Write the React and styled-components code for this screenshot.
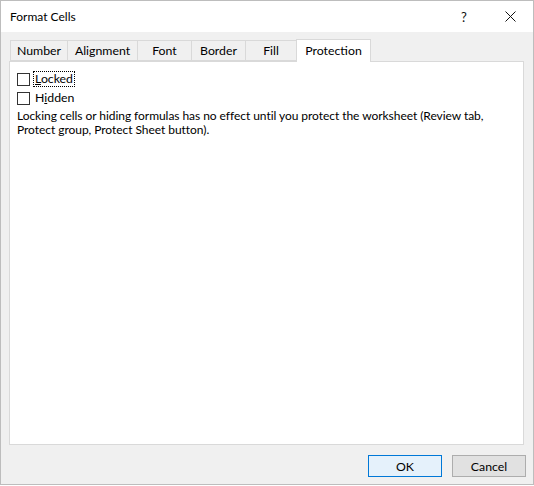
import React from "react";
import styled, { createGlobalStyle } from "styled-components";

const Global = createGlobalStyle`
  html, body { margin: 0; padding: 0; background: #ffffff; }
  body { font-family: "Lato", "Noto Sans", sans-serif; font-size: 12px; color: #000; }
  * { box-sizing: border-box; }
`;

const Window = styled.div`
  width: 534px;
  height: 485px;
  border: 1px solid #bdbdbd;
  display: flex;
  flex-direction: column;
  background: #f0f0f0;
`;

const TitleBar = styled.div`
  height: 31px;
  background: #ffffff;
  display: flex;
  align-items: center;
  padding-left: 9px;
  flex-shrink: 0;
`;

const Title = styled.div`
  flex: 1;
  font-size: 12px;
  padding-bottom: 1px;
`;

const TitleButton = styled.div`
  width: 46px;
  height: 31px;
  display: flex;
  align-items: center;
  justify-content: center;
  font-size: 13px;
  color: #111;
`;

const Body = styled.div`
  flex: 1;
  display: flex;
  flex-direction: column;
  padding: 7px 8px 0 8px;
`;

const TabStrip = styled.div`
  display: flex;
  align-items: flex-end;
  height: 22px;
  padding-left: 1px;
  position: relative;
  z-index: 1;
`;

const Tab = styled.div`
  width: ${(p) => p.$w}px;
  height: ${(p) => (p.$active ? 23 : 21)}px;
  margin-bottom: ${(p) => (p.$active ? -1 : 0)}px;
  margin-left: ${(p) => (p.$first ? 0 : -1)}px;
  background: ${(p) => (p.$active ? "#ffffff" : "#f0f0f0")};
  border: 1px solid #d9d9d9;
  border-bottom: ${(p) => (p.$active ? "none" : "1px solid #d9d9d9")};
  display: flex;
  align-items: center;
  justify-content: center;
  padding-bottom: ${(p) => (p.$active ? 2 : 0)}px;
  font-size: 12.3px;
  color: #000;
`;

const Panel = styled.div`
  height: 384px;
  width: 515px;
  background: #ffffff;
  border: 1px solid #d9d9d9;
  padding: 9px 7px 0 7px;
  display: flex;
  flex-direction: column;
`;

const CheckRow = styled.label`
  display: flex;
  align-items: center;
  height: 16px;
  margin-bottom: ${(p) => p.$mb || 0}px;
  font-size: 12.3px;
`;

const Box = styled.span`
  width: 13px;
  height: 13px;
  border: 1px solid #333333;
  background: #fff;
  flex-shrink: 0;
  margin-right: 3px;
`;

const Label = styled.span`
  padding: 0 1px;
  line-height: 14px;
  border: 1px dotted ${(p) => (p.$focus ? "#000" : "transparent")};
`;

const U = styled.span`
  text-decoration: underline;
`;

const Note = styled.p`
  margin: 3px 0 0 0;
  line-height: 14px;
  font-size: 12px;
  letter-spacing: -0.05px;
  white-space: nowrap;
`;

const Footer = styled.div`
  display: flex;
  justify-content: flex-end;
  gap: 10px;
  padding: 10px 0 0 0;
  margin-right: -1px;
`;

const Button = styled.button`
  width: 74px;
  height: 22px;
  font-family: inherit;
  font-size: 12.3px;
  color: #000;
  background: ${(p) => (p.$primary ? "#e5f1fb" : "#e1e1e1")};
  border: 1px solid ${(p) => (p.$primary ? "#0078d7" : "#adadad")};
  padding: 0;
`;

const tabs = [
  { t: "Number", w: 58 },
  { t: "Alignment", w: 71 },
  { t: "Font", w: 55 },
  { t: "Border", w: 55 },
  { t: "Fill", w: 52 },
  { t: "Protection", w: 75, active: true },
];

export default function App() {
  return (
    <>
      <Global />
      <Window>
        <TitleBar>
          <Title>Format Cells</Title>
          <TitleButton>?</TitleButton>
          <TitleButton>
            <svg width="11" height="11" viewBox="0 0 11 11">
              <path d="M0.5 0.5 L10.5 10.5 M10.5 0.5 L0.5 10.5" stroke="#111" strokeWidth="1" />
            </svg>
          </TitleButton>
        </TitleBar>
        <Body>
          <TabStrip>
            {tabs.map((x, i) => (
              <Tab key={x.t} $w={x.w} $active={x.active} $first={i === 0}>
                {x.t}
              </Tab>
            ))}
          </TabStrip>
          <Panel>
            <CheckRow $mb={3}>
              <Box />
              <Label $focus>
                <U>L</U>ocked
              </Label>
            </CheckRow>
            <CheckRow>
              <Box />
              <Label>
                H<U>i</U>dden
              </Label>
            </CheckRow>
            <Note>
              Locking cells or hiding formulas has no effect until you protect the worksheet (Review tab,
              <br />
              Protect group, Protect Sheet button).
            </Note>
          </Panel>
          <Footer>
            <Button $primary>OK</Button>
            <Button>Cancel</Button>
          </Footer>
        </Body>
      </Window>
    </>
  );
}
